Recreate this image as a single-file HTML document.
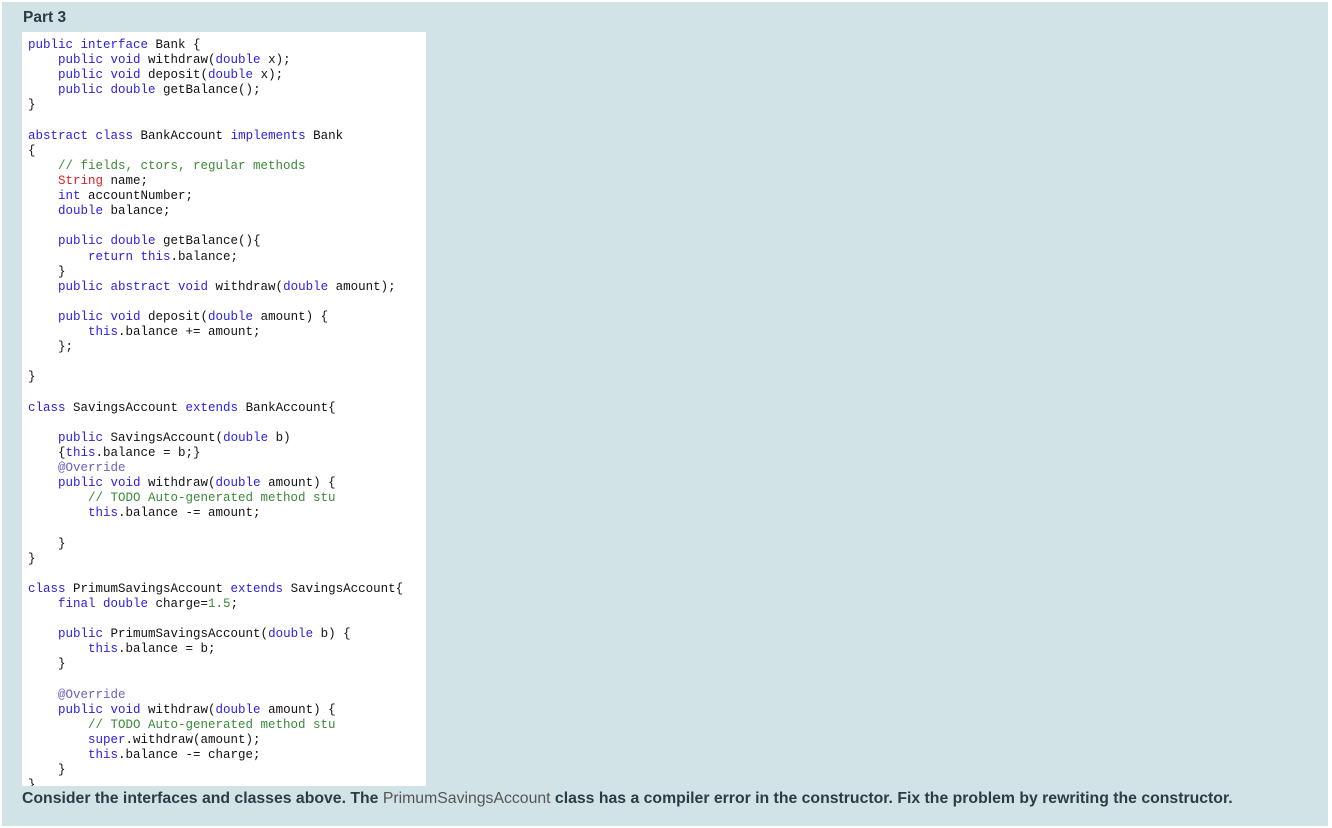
<!DOCTYPE html>
<html><head><meta charset="utf-8"><style>
html,body{margin:0;padding:0}
body{width:1332px;height:828px;background:#fff;position:relative;overflow:hidden;font-family:"Liberation Sans",sans-serif}
#bg{position:absolute;left:2px;top:2px;width:1326px;height:824px;background:#d1e3e7}
#title{position:absolute;left:23px;top:9px;font-weight:bold;font-size:15.5px;color:#2d3b45}
#code{position:absolute;left:22px;top:32px;width:404px;height:754px;background:#fff;overflow:hidden}
pre{margin:0;position:absolute;left:6px;top:6px;font-family:"Liberation Mono",monospace;font-size:12.5px;line-height:15.11px;color:#111}
.k{color:#2a1ee0}.c{color:#3a8a3a}.r{color:#e02020}.a{color:#6a60c0}
#q{position:absolute;left:22px;top:790px;font-size:15.8px;font-weight:bold;color:#2d3b45;white-space:nowrap}
#q span{font-weight:normal;color:#555}
</style></head><body>
<div id="bg"></div>
<div id="title">Part 3</div>
<div id="code"><pre><span class="k">public interface</span> Bank {
    <span class="k">public void</span> withdraw(<span class="k">double</span> x);
    <span class="k">public void</span> deposit(<span class="k">double</span> x);
    <span class="k">public double</span> getBalance();
}

<span class="k">abstract class</span> BankAccount <span class="k">implements</span> Bank
{
    <span class="c">// fields, ctors, regular methods</span>
    <span class="r">String</span> name;
    <span class="k">int</span> accountNumber;
    <span class="k">double</span> balance;

    <span class="k">public double</span> getBalance(){
        <span class="k">return this</span>.balance;
    }
    <span class="k">public abstract void</span> withdraw(<span class="k">double</span> amount);

    <span class="k">public void</span> deposit(<span class="k">double</span> amount) {
        <span class="k">this</span>.balance += amount;
    };

}

<span class="k">class</span> SavingsAccount <span class="k">extends</span> BankAccount{

    <span class="k">public</span> SavingsAccount(<span class="k">double</span> b)
    {<span class="k">this</span>.balance = b;}
    <span class="a">@Override</span>
    <span class="k">public void</span> withdraw(<span class="k">double</span> amount) {
        <span class="c">// TODO Auto-generated method stu</span>
        <span class="k">this</span>.balance -= amount;

    }
}

<span class="k">class</span> PrimumSavingsAccount <span class="k">extends</span> SavingsAccount{
    <span class="k">final double</span> charge=<span class="c">1.5</span>;

    <span class="k">public</span> PrimumSavingsAccount(<span class="k">double</span> b) {
        <span class="k">this</span>.balance = b;
    }

    <span class="a">@Override</span>
    <span class="k">public void</span> withdraw(<span class="k">double</span> amount) {
        <span class="c">// TODO Auto-generated method stu</span>
        <span class="k">super</span>.withdraw(amount);
        <span class="k">this</span>.balance -= charge;
    }
}</pre></div>
<div id="q">Consider the interfaces and classes above. The <span>PrimumSavingsAccount</span> class has a compiler error in the constructor. Fix the problem by rewriting the constructor.</div>
</body></html>
